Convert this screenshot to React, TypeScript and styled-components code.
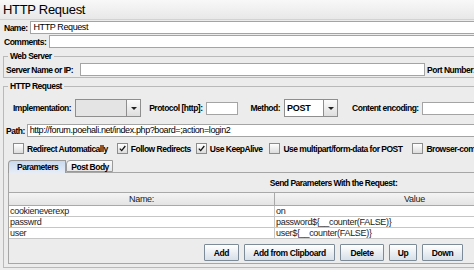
import React from 'react';
import styled, { createGlobalStyle } from 'styled-components';

const GlobalStyle = createGlobalStyle`
  html, body {
    margin: 0;
    padding: 0;
    background: #ececec;
    overflow: hidden;
  }
  body {
    font-family: "Liberation Sans", Arial, sans-serif;
    color: #000;
  }
`;

const Frame = styled.div`
  width: 660px;
  height: 270px;
  background: #ececec;
`;

const TitleBar = styled.div`
  height: 19px;
  padding-left: 3px;
  font-size: 13px;
  letter-spacing: -0.3px;
  line-height: 19px;
  background: linear-gradient(#f8f8f8, #e8e8e8);
  border-bottom: 1px solid #d2d2d2;
`;

const FieldRow = styled.div<{ $mt?: number; $h?: number }>`
  display: flex;
  align-items: center;
  height: ${p => p.$h ?? 13}px;
  margin-top: ${p => p.$mt ?? 0}px;
`;

const Label = styled.span<{ $ml?: number; $mr?: number }>`
  font-size: 8.5px;
  font-weight: bold;
  letter-spacing: -0.5px;
  white-space: nowrap;
  margin-left: ${p => p.$ml ?? 0}px;
  margin-right: ${p => p.$mr ?? 2}px;
`;

const TextField = styled.div<{ $w?: number }>`
  box-sizing: border-box;
  height: 13px;
  flex: ${p => (p.$w ? `0 0 ${p.$w}px` : '1 1 auto')};
  background: #fff;
  border: 1px solid #a4a4a4;
  padding-left: 2px;
  font-size: 9px;
  letter-spacing: -0.4px;
  line-height: 11px;
  white-space: nowrap;
  overflow: hidden;
`;

const Group = styled.fieldset<{ $mt: number; $pb: number }>`
  margin: ${p => p.$mt}px 0 0 3px;
  padding: 0 0 ${p => p.$pb}px 0;
  border: 1px solid #b9b9b9;
  min-width: 0;
`;

const Legend = styled.legend`
  margin-left: 4px;
  padding: 0 2px;
  font-size: 8.5px;
  font-weight: bold;
  letter-spacing: -0.5px;
  line-height: 10px;
`;

const Combo = styled.div<{ $w: number }>`
  box-sizing: border-box;
  display: flex;
  width: ${p => p.$w}px;
  height: 18px;
  margin-right: 8px;
  border: 1px solid #8e8e8e;
`;

const ComboValue = styled.div<{ $disabled?: boolean }>`
  flex: 1;
  background: ${p => (p.$disabled ? '#e4e4e4' : '#fff')};
  border-right: 1px solid #8e8e8e;
  padding-left: 2px;
  font-size: 9px;
  font-weight: bold;
  letter-spacing: -0.3px;
  line-height: 16px;
`;

const ComboButton = styled.div`
  width: 13px;
  display: flex;
  align-items: center;
  justify-content: center;
  background: linear-gradient(#fbfbfb, #dedede);
`;

const Arrow = styled.span`
  width: 0;
  height: 0;
  border-left: 3px solid transparent;
  border-right: 3px solid transparent;
  border-top: 3px solid #222;
`;

const CheckRow = styled.div`
  display: flex;
  align-items: center;
  height: 13px;
  margin-top: 5px;
`;

const CheckItem = styled.label<{ $ml: number }>`
  display: flex;
  align-items: center;
  margin-left: ${p => p.$ml}px;
  font-size: 8.5px;
  font-weight: bold;
  letter-spacing: -0.5px;
  white-space: nowrap;
`;

const Box = styled.span`
  box-sizing: border-box;
  width: 11px;
  height: 11px;
  margin-right: 3px;
  border: 1px solid #8c8c8c;
  background: linear-gradient(#ffffff, #dcdcdc);
  display: flex;
  align-items: center;
  justify-content: center;
`;

const TabArea = styled.div`
  margin: 5px 0 0 4px;
`;

const TabStrip = styled.div`
  display: flex;
  align-items: flex-end;
  height: 12px;
`;

const Tab = styled.div<{ $active?: boolean }>`
  box-sizing: border-box;
  height: ${p => (p.$active ? 13 : 12)}px;
  margin-bottom: ${p => (p.$active ? -1 : 0)}px;
  padding: ${p => (p.$active ? '0 7px 0 8px' : '0 3px 0 4px')};
  border: 1px solid #9a9a9a;
  border-bottom: ${p => (p.$active ? 'none' : '1px solid #9a9a9a')};
  border-top-left-radius: 4px;
  background: ${p => (p.$active ? 'linear-gradient(#c9d9ee, #e6edf6)' : 'linear-gradient(#fafafa, #e6e6e6)')};
  font-size: 8.5px;
  font-weight: bold;
  letter-spacing: -0.5px;
  line-height: 12px;
  white-space: nowrap;
  position: relative;
  z-index: ${p => (p.$active ? 1 : 0)};
`;

const TabPanel = styled.div`
  box-sizing: border-box;
  height: 92px;
  border: 1px solid #a6a6a6;
  padding: 5px 0 0 0;
`;

const Caption = styled.div`
  text-align: center;
  font-size: 8.5px;
  font-weight: bold;
  letter-spacing: -0.5px;
  line-height: 10px;
`;

const Table = styled.div`
  margin-top: 4px;
`;

const HeaderRow = styled.div`
  display: grid;
  grid-template-columns: 266px 280px 1fr;
  height: 12px;
  border-top: 1px solid #a9a9a9;
  border-bottom: 1px solid #a9a9a9;
  background: linear-gradient(#f4f4f4, #e4e4e4);
`;

const HeaderCell = styled.div`
  border-right: 1px solid #a9a9a9;
  text-align: center;
  font-size: 9px;
  letter-spacing: -0.3px;
  line-height: 12px;
  color: #222;
`;

const BodyRow = styled.div`
  display: grid;
  grid-template-columns: 266px 1fr;
  height: 10px;
  background: #fff;
  border-bottom: 1px solid #c6c6c6;
`;

const Cell = styled.div`
  border-right: 1px solid #c6c6c6;
  padding-left: 1px;
  font-size: 9px;
  letter-spacing: -0.3px;
  line-height: 10px;
  white-space: nowrap;
  overflow: hidden;
  color: #222;
`;

const ButtonBar = styled.div`
  display: flex;
  justify-content: center;
  gap: 5px;
  margin-top: 5px;
`;

const Button = styled.button<{ $w: number }>`
  box-sizing: border-box;
  width: ${p => p.$w}px;
  height: 17px;
  padding: 0;
  border: 1px solid #7d8b98;
  border-radius: 1px;
  background: linear-gradient(#ffffff, #d7dfe8);
  font-family: "Liberation Sans", Arial, sans-serif;
  font-size: 8.5px;
  font-weight: bold;
  letter-spacing: -0.4px;
  color: #000;
`;

const Check = () => (
  <svg width="7" height="7" viewBox="0 0 7 7">
    <path d="M0.8 3.6 L2.7 5.6 L6.3 1" fill="none" stroke="#111" strokeWidth="1.3" />
  </svg>
);

const checks = [
  { label: 'Redirect Automatically', on: false, ml: 9 },
  { label: 'Follow Redirects', on: true, ml: 9 },
  { label: 'Use KeepAlive', on: true, ml: 5 },
  { label: 'Use multipart/form-data for POST', on: false, ml: 7 },
  { label: 'Browser-compatible headers', on: false, ml: 10 },
];

const params = [
  { name: 'cookieneverexp', value: 'on' },
  { name: 'passwrd', value: 'password${__counter(FALSE)}' },
  { name: 'user', value: 'user${__counter(FALSE)}' },
];

const buttons = [
  { label: 'Add', w: 35 },
  { label: 'Add from Clipboard', w: 91 },
  { label: 'Delete', w: 44 },
  { label: 'Up', w: 28 },
  { label: 'Down', w: 41 },
];

export default function App() {
  return (
    <>
      <GlobalStyle />
      <Frame>
        <TitleBar>HTTP Request</TitleBar>
        <FieldRow $mt={1}>
          <Label $ml={4} $mr={3}>Name:</Label>
          <TextField>HTTP Request</TextField>
        </FieldRow>
        <FieldRow $mt={1}>
          <Label $ml={4} $mr={3}>Comments:</Label>
          <TextField />
        </FieldRow>

        <Group $mt={3} $pb={1}>
          <Legend>Web Server</Legend>
          <FieldRow $mt={2}>
            <Label $ml={2} $mr={7}>Server Name or IP:</Label>
            <TextField $w={345} />
            <Label $ml={2}>Port Number:</Label>
            <TextField />
          </FieldRow>
        </Group>

        <Group $mt={3} $pb={3}>
          <Legend>HTTP Request</Legend>
          <FieldRow $mt={8} $h={18}>
            <Label $ml={9} $mr={4}>Implementation:</Label>
            <Combo $w={66}>
              <ComboValue $disabled />
              <ComboButton><Arrow /></ComboButton>
            </Combo>
            <Label $mr={3}>Protocol [http]:</Label>
            <TextField $w={32} />
            <Label $ml={13} $mr={4}>Method:</Label>
            <Combo $w={54}>
              <ComboValue>POST</ComboValue>
              <ComboButton><Arrow /></ComboButton>
            </Combo>
            <Label $ml={6} $mr={3}>Content encoding:</Label>
            <TextField />
          </FieldRow>
          <FieldRow $mt={7}>
            <Label $ml={2} $mr={2}>Path:</Label>
            <TextField>http://forum.poehali.net/index.php?board=;action=login2</TextField>
          </FieldRow>
          <CheckRow>
            {checks.map(c => (
              <CheckItem key={c.label} $ml={c.ml}>
                <Box>{c.on ? <Check /> : null}</Box>
                {c.label}
              </CheckItem>
            ))}
          </CheckRow>

          <TabArea>
            <TabStrip>
              <Tab $active>Parameters</Tab>
              <Tab>Post Body</Tab>
            </TabStrip>
            <TabPanel>
              <Caption>Send Parameters With the Request:</Caption>
              <Table>
                <HeaderRow>
                  <HeaderCell>Name:</HeaderCell>
                  <HeaderCell>Value</HeaderCell>
                  <HeaderCell />
                </HeaderRow>
                {params.map(p => (
                  <BodyRow key={p.name}>
                    <Cell>{p.name}</Cell>
                    <Cell>{p.value}</Cell>
                  </BodyRow>
                ))}
              </Table>
              <ButtonBar>
                {buttons.map(b => (
                  <Button key={b.label} $w={b.w}>{b.label}</Button>
                ))}
              </ButtonBar>
            </TabPanel>
          </TabArea>
        </Group>
      </Frame>
    </>
  );
}
